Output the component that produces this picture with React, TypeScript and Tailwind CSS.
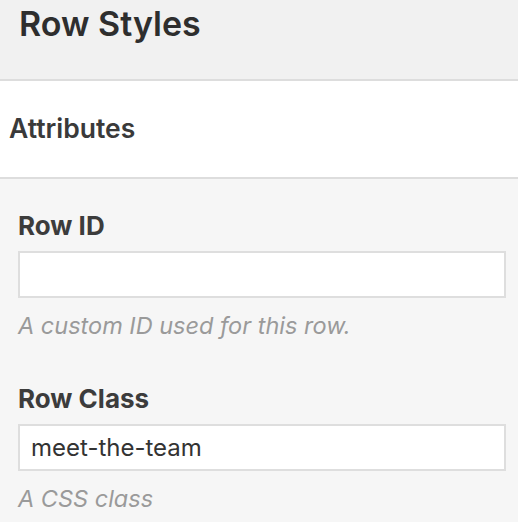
import React from "react";

const font = { fontFamily: "Inter, 'Noto Sans', sans-serif" };

function Field({ label, value, help }: { label: string; value: string; help: string }) {
  return (
    <div className="flex flex-col">
      <label className="text-[26px] font-bold leading-[30px] text-[#3c3c3c]">{label}</label>
      <div className="mt-[10px] h-[47px] border-2 border-[#dedede] bg-white px-[11px] flex items-center">
        <span className="text-[24px] text-[#333] leading-none">{value}</span>
      </div>
      <p className="mt-[14px] text-[23.5px] italic leading-[28px] text-[#9a9a9a]">{help}</p>
    </div>
  );
}

export default function App() {
  return (
    <div className="w-[518px] h-[522px] overflow-hidden bg-[#f6f6f6]" style={font}>
      <div className="h-[81px] bg-[#f1f1f1] border-b-2 border-[#dddddd] px-[19px] pt-[5px]">
        <h1 className="text-[34px] font-semibold leading-[38px] text-[#2e2e2e]">Row Styles</h1>
      </div>
      <div className="h-[98px] bg-white border-b-2 border-[#dddddd] px-[9px] flex items-center">
        <h2 className="text-[26.5px] font-semibold text-[#3a3a3a]">Attributes</h2>
      </div>
      <div className="px-[18px] pt-[32px] pr-[12px] flex flex-col gap-[44px]">
        <Field label="Row ID" value="" help="A custom ID used for this row." />
        <Field label="Row Class" value="meet-the-team" help="A CSS class" />
      </div>
    </div>
  );
}
